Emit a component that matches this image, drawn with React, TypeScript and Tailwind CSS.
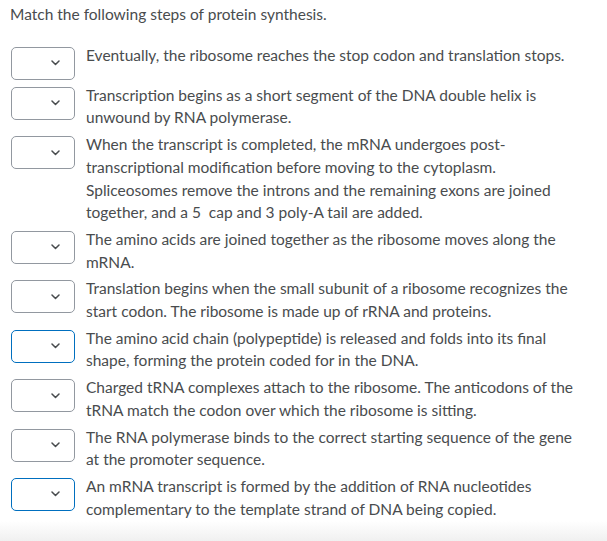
const steps: { text: string; focused?: boolean }[] = [
  { text: 'Eventually, the ribosome reaches the stop codon and translation stops.' },
  { text: 'Transcription begins as a short segment of the DNA double helix is unwound by RNA polymerase.' },
  {
    text:
      'When the transcript is completed, the mRNA undergoes post-transcriptional modification before moving to the cytoplasm. Spliceosomes remove the introns and the remaining exons are joined together, and a 5\u00a0 cap and 3 poly-A tail are added.',
  },
  { text: 'The amino acids are joined together as the ribosome moves along the mRNA.' },
  {
    text:
      'Translation begins when the small subunit of a ribosome recognizes the start codon. The ribosome is made up of rRNA and proteins.',
  },
  {
    text: 'The amino acid chain (polypeptide) is released and folds into its final shape, forming the protein coded for in the DNA.',
    focused: true,
  },
  {
    text: 'Charged tRNA complexes attach to the ribosome. The anticodons of the tRNA match the codon over which the ribosome is sitting.',
  },
  { text: 'The RNA polymerase binds to the correct starting sequence of the gene at the promoter sequence.' },
  {
    text: 'An mRNA transcript is formed by the addition of RNA nucleotides complementary to the template strand of DNA being copied.',
    focused: true,
  },
];

const SelectBox = ({ focused }: { focused?: boolean }) => (
  <div
    className={
      focused
        ? 'mt-[3px] w-[64px] h-[33px] shrink-0 rounded-[5px] border border-[#006fbf] bg-white flex items-center justify-end pr-[14px]'
        : 'mt-[3px] w-[64px] h-[33px] shrink-0 rounded-[5px] border border-[#9298a0] bg-white flex items-center justify-end pr-[14px]'
    }
  >
    <svg width="9" height="6" viewBox="0 0 9 6" fill="none">
      <polyline points="1,1 4.5,4.5 8,1" stroke="#494c4e" strokeWidth="1.5" strokeLinecap="round" strokeLinejoin="round" />
    </svg>
  </div>
);

export default function App() {
  return (
    <div className="w-[607px] h-[541px] bg-white flex flex-col font-['Lato',sans-serif] text-[#494c4e] text-[15.5px] leading-[22.7px] overflow-hidden">
      <div className="pl-[10px] pt-[3px]">Match the following steps of protein synthesis.</div>

      <div className="mt-[18px] pl-[11px] pr-[22px] flex flex-col gap-[4px]">
        {steps.map((s, i) => (
          <div key={i} className="flex items-start gap-[11px]">
            <SelectBox focused={s.focused} />
            <p className="flex-1">{s.text}</p>
          </div>
        ))}
      </div>

      <div className="mt-auto h-[20px] bg-gradient-to-b from-white to-[#f0f0f0]" />
    </div>
  );
}
